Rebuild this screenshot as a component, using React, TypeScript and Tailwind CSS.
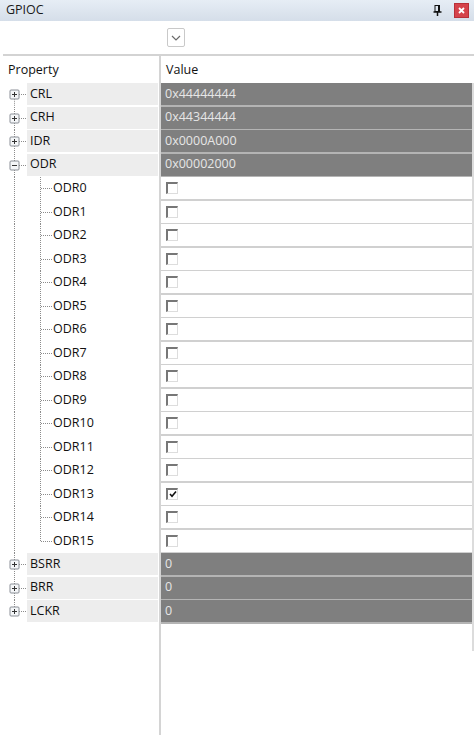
import React from 'react'

type Row = { name: string; value?: string; kind: 'top' | 'child'; expanded?: boolean; checked?: boolean }

const rows: Row[] = [
  { name: 'CRL', value: '0x44444444', kind: 'top' },
  { name: 'CRH', value: '0x44344444', kind: 'top' },
  { name: 'IDR', value: '0x0000A000', kind: 'top' },
  { name: 'ODR', value: '0x00002000', kind: 'top', expanded: true },
  ...Array.from({ length: 16 }, (_, i) => ({ name: `ODR${i}`, kind: 'child' as const, checked: i === 13 })),
  { name: 'BSRR', value: '0', kind: 'top' },
  { name: 'BRR', value: '0', kind: 'top' },
  { name: 'LCKR', value: '0', kind: 'top' },
]

const DOT = { stroke: '#8c8c8c', strokeWidth: 1, strokeDasharray: '1 1' }

function Lines({ index, row }: { index: number; row: Row }) {
  const last = index === rows.length - 1
  const first = index === 0
  const childIdx = row.kind === 'child' ? index - 4 : -1
  return (
    <svg width="55" height="23.5" viewBox="0 0 55 23.5" className="shrink-0">
      <line x1="14.5" y1={first ? 11.75 : 0} x2="14.5" y2={last ? 11.75 : 23.5} {...DOT} />
      {row.kind === 'top' ? (
        <>
          <line x1="19" y1="11.5" x2="27" y2="11.5" {...DOT} />
          <rect x="10" y="7" width="9" height="9" fill="#f4f6f8" stroke="#8a8f96" strokeWidth="1" rx="1" />
          <line x1="12" y1="11.5" x2="17" y2="11.5" stroke="#333" strokeWidth="1" />
          {!row.expanded && <line x1="14.5" y1="9" x2="14.5" y2="14" stroke="#333" strokeWidth="1" />}
        </>
      ) : (
        <>
          <line x1="40.5" y1="0" x2="40.5" y2={childIdx === 15 ? 11.75 : 23.5} {...DOT} />
          <line x1="41" y1="11.5" x2="53" y2="11.5" {...DOT} />
        </>
      )}
    </svg>
  )
}

function Checkbox({ checked }: { checked?: boolean }) {
  return (
    <div className="ml-[5px] w-[12px] h-[12px] bg-white border-t-2 border-l-2 border-t-[#777] border-l-[#777] border-b border-r border-b-[#ddd] border-r-[#ddd] flex items-center justify-center">
      {checked && (
        <svg width="8" height="8" viewBox="0 0 8 8">
          <path d="M1 4 L3 6.2 L7 1.5" fill="none" stroke="#111" strokeWidth="1.6" />
        </svg>
      )}
    </div>
  )
}

export default function App() {
  return (
    <div className="w-[474px] h-[735px] bg-white flex flex-col overflow-hidden text-[#111]" style={{ fontFamily: '"Open Sans", "Noto Sans", sans-serif' }}>
      <div className="h-[21px] shrink-0 flex items-center justify-between pl-[6px] pr-[5px] bg-gradient-to-b from-[#e6edf5] to-[#d5dee9]">
        <span className="text-[12.5px] leading-none text-[#1a1a1a]">GPIOC</span>
        <div className="flex items-center gap-[12px]">
          <svg width="9" height="11" viewBox="0 0 9 11">
            <rect x="2" y="0.5" width="4.5" height="6" fill="none" stroke="#111" strokeWidth="1" />
            <rect x="5" y="0.5" width="1.5" height="6" fill="#111" />
            <line x1="0.5" y1="7" x2="8.5" y2="7" stroke="#111" strokeWidth="1.5" />
            <line x1="4.5" y1="7" x2="4.5" y2="11" stroke="#111" strokeWidth="1.5" />
          </svg>
          <div className="w-[15px] h-[15px] bg-[#d5434b] border border-[#b83038] flex items-center justify-center">
            <svg width="7" height="7" viewBox="0 0 7 7">
              <path d="M1 1 L6 6 M6 1 L1 6" stroke="#fff" strokeWidth="1.8" />
            </svg>
          </div>
        </div>
      </div>

      <div className="h-[33px] shrink-0 flex items-start pl-[167px] pt-[7px]">
        <div className="w-[18px] h-[19px] border border-[#c9c9c9] rounded-[2px] flex items-center justify-center bg-white">
          <svg width="10" height="6" viewBox="0 0 10 6">
            <path d="M1 1 L5 5 L9 1" fill="none" stroke="#6b6b6b" strokeWidth="1.2" />
          </svg>
        </div>
      </div>
      <div className="ml-[3px] h-[2px] shrink-0 bg-[#d3d3d3]" />

      <div className="flex-1 flex">
        <div className="w-[159px] shrink-0 flex flex-col">
          <div className="h-[27px] flex items-center pl-[8px] pt-[1px] text-[12.5px]">Property</div>
          {rows.map((r, i) => (
            <div key={r.name} className="h-[23.5px] flex items-stretch">
              <Lines index={i} row={r} />
              <div
                className={
                  r.kind === 'top'
                    ? 'ml-[-28px] w-[131px] h-[22px] bg-[#ededed] flex items-center pl-[3px] text-[12.5px]'
                    : 'ml-[-2px] flex items-center text-[12.5px]'
                }
              >
                {r.name}
              </div>
            </div>
          ))}
        </div>
        <div className="w-[2px] shrink-0 bg-[#d4d4d4]" />
        <div className="flex-1 flex flex-col">
          <div className="h-[27px] flex items-center pl-[5px] pt-[1px] text-[12.5px]">Value</div>
          {rows.map(r =>
            r.kind === 'top' ? (
              <div key={r.name} className="h-[23.5px] flex flex-col">
                <div className="h-[22px] bg-[#7f7f7f] text-[#e6e6e6] flex items-center pl-[4px] text-[12.5px]">{r.value}</div>
                <div className="flex-1 bg-[#b4b4b4]" />
              </div>
            ) : (
              <div key={r.name} className="h-[23.5px] flex flex-col">
                <div className="h-[22px] flex items-center">
                  <Checkbox checked={r.checked} />
                </div>
                <div className="flex-1 bg-[#d0d0d0]" />
              </div>
            )
          )}
        </div>
        <div className="w-[2px] shrink-0 bg-[#dcdcdc] h-[568px] mt-[27px]" />
      </div>
    </div>
  )
}
